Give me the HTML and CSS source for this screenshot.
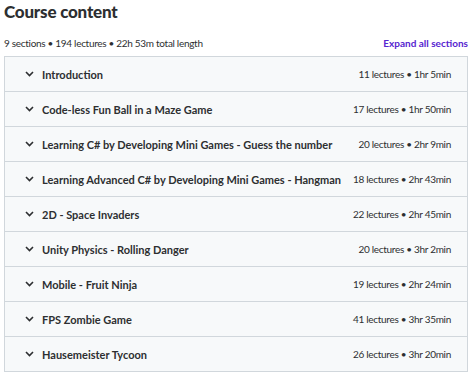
FILE: index.html
```html
<!DOCTYPE html>
<html>
<head>
<meta charset="utf-8">
<link rel="stylesheet" href="styles.css">
</head>
<body>
<div class="page">
  <h2 class="title">Course content</h2>
  <div class="meta">
    <span class="stats">9 sections • 194 lectures • 22h 53m total length</span>
    <span class="expand">Expand all sections</span>
  </div>
  <div class="sections">
    <div class="row"><span class="chev"><svg width="9" height="6" viewBox="0 0 9 6"><path d="M1 1l3.5 3.5L8 1" fill="none" stroke="#2d2f31" stroke-width="1.6"/></svg></span><span class="name">Introduction</span><span class="info">11 lectures • 1hr 5min</span></div>
    <div class="row"><span class="chev"><svg width="9" height="6" viewBox="0 0 9 6"><path d="M1 1l3.5 3.5L8 1" fill="none" stroke="#2d2f31" stroke-width="1.6"/></svg></span><span class="name">Code-less Fun Ball in a Maze Game</span><span class="info">17 lectures • 1hr 50min</span></div>
    <div class="row"><span class="chev"><svg width="9" height="6" viewBox="0 0 9 6"><path d="M1 1l3.5 3.5L8 1" fill="none" stroke="#2d2f31" stroke-width="1.6"/></svg></span><span class="name">Learning C# by Developing Mini Games - Guess the number</span><span class="info">20 lectures • 2hr 9min</span></div>
    <div class="row"><span class="chev"><svg width="9" height="6" viewBox="0 0 9 6"><path d="M1 1l3.5 3.5L8 1" fill="none" stroke="#2d2f31" stroke-width="1.6"/></svg></span><span class="name">Learning Advanced C# by Developing Mini Games - Hangman</span><span class="info">18 lectures • 2hr 43min</span></div>
    <div class="row"><span class="chev"><svg width="9" height="6" viewBox="0 0 9 6"><path d="M1 1l3.5 3.5L8 1" fill="none" stroke="#2d2f31" stroke-width="1.6"/></svg></span><span class="name">2D - Space Invaders</span><span class="info">22 lectures • 2hr 45min</span></div>
    <div class="row"><span class="chev"><svg width="9" height="6" viewBox="0 0 9 6"><path d="M1 1l3.5 3.5L8 1" fill="none" stroke="#2d2f31" stroke-width="1.6"/></svg></span><span class="name">Unity Physics - Rolling Danger</span><span class="info">20 lectures • 3hr 2min</span></div>
    <div class="row"><span class="chev"><svg width="9" height="6" viewBox="0 0 9 6"><path d="M1 1l3.5 3.5L8 1" fill="none" stroke="#2d2f31" stroke-width="1.6"/></svg></span><span class="name">Mobile - Fruit Ninja</span><span class="info">19 lectures • 2hr 24min</span></div>
    <div class="row"><span class="chev"><svg width="9" height="6" viewBox="0 0 9 6"><path d="M1 1l3.5 3.5L8 1" fill="none" stroke="#2d2f31" stroke-width="1.6"/></svg></span><span class="name">FPS Zombie Game</span><span class="info">41 lectures • 3hr 35min</span></div>
    <div class="row"><span class="chev"><svg width="9" height="6" viewBox="0 0 9 6"><path d="M1 1l3.5 3.5L8 1" fill="none" stroke="#2d2f31" stroke-width="1.6"/></svg></span><span class="name">Hausemeister Tycoon</span><span class="info">26 lectures • 3hr 20min</span></div>
  </div>
</div>
</body>
</html>
```

FILE: styles.css
```css
* { box-sizing: border-box; }
body {
  margin: 0;
  background: #ffffff;
  font-family: Lato, "Noto Sans", sans-serif;
  color: #2d2f31;
}
.page {
  padding: 0 6px 0 4px;
}
.title {
  margin: 0;
  font-size: 17px;
  font-weight: 900;
  line-height: 23px;
  letter-spacing: -0.2px;
}
.meta {
  display: flex;
  justify-content: space-between;
  align-items: center;
  height: 33px;
  padding-top: 6px;
  font-size: 10px;
}
.stats {
  color: #2d2f31;
  letter-spacing: -0.3px;
}
.expand {
  color: #5624d0;
  font-weight: 700;
  font-size: 10px;
}
.sections {
  border: 1px solid #d1d7dc;
  border-bottom: none;
}
.row {
  display: flex;
  align-items: center;
  height: 35px;
  background: #f7f9fa;
  border-bottom: 1px solid #d1d7dc;
  padding: 0 16px 0 20px;
  font-size: 11px;
}
.chev {
  flex-shrink: 0;
  width: 17px;
  display: flex;
  align-items: center;
}
.name {
  flex: 1;
  font-weight: 700;
  white-space: nowrap;
}
.info {
  flex-shrink: 0;
  margin-left: 8px;
  font-size: 10px;
  letter-spacing: -0.3px;
  color: #2d2f31;
  white-space: nowrap;
}
```
